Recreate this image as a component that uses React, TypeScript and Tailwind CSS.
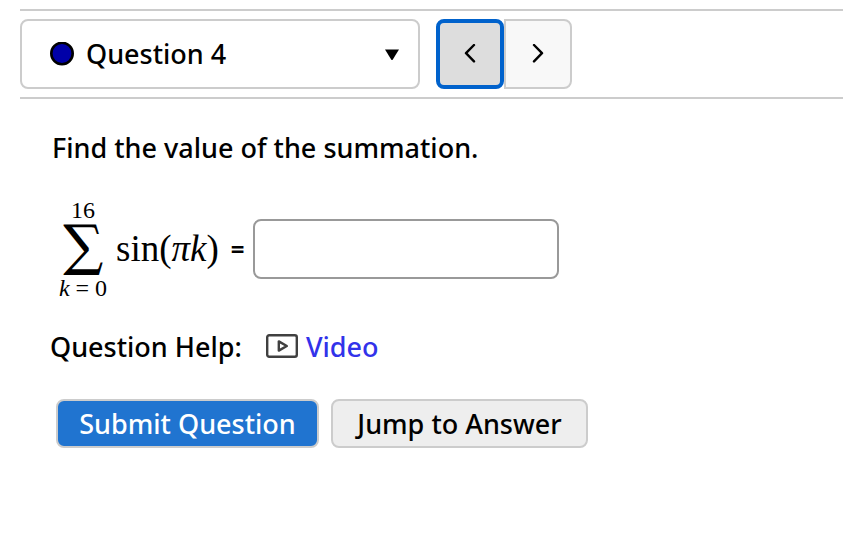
import { useState } from "react";

function Chevron({ points }: { points: string }) {
  return (
    <svg width="12" height="20" viewBox="0 0 12 20" fill="none" stroke="#000" strokeWidth="2.4" strokeLinecap="round" strokeLinejoin="round" aria-hidden="true">
      <polyline points={points} />
    </svg>
  );
}

function QuestionNav() {
  return (
    <nav className="ml-5 flex gap-4 border-y-2 border-[#ccc] py-2">
      <div className="relative flex h-[70px] w-[400px] items-center rounded-lg border-2 border-[#ccc]">
        <svg className="pointer-events-none absolute left-7" width="24" height="24" viewBox="0 0 24 24" aria-hidden="true">
          <circle cx="12" cy="11.5" r="10.7" fill="#0000a8" stroke="#000" strokeWidth="2.6" />
        </svg>
        <select aria-label="Question" className="h-full w-full appearance-none rounded-lg bg-transparent pl-16 font-medium text-black">
          <option>Question 4</option>
        </select>
        <svg className="pointer-events-none absolute right-[18px]" width="16" height="12" viewBox="0 0 16 12" aria-hidden="true">
          <path d="M1 1.6h14L8.8 11.4q-.8 1-1.6 0z" fill="#000" />
        </svg>
      </div>
      <div className="flex">
        <button type="button" aria-label="Previous question" className="flex w-[68px] items-center justify-center rounded-lg border-4 border-[#0062cc] bg-[#ddd]">
          <Chevron points="10,1 2,9.2 10,17.4" />
        </button>
        <button type="button" aria-label="Next question" className="flex w-[68px] items-center justify-center rounded-r-lg border-2 border-[#ccc] bg-[#f8f8f8]">
          <Chevron points="2,1 10,9.2 2,17.4" />
        </button>
      </div>
    </nav>
  );
}

function Summation() {
  return (
    <div className="flex items-center font-['Liberation_Serif',serif] font-normal">
      <div className="flex w-[58px] flex-col items-center">
        <span className="text-2xl leading-6">16</span>
        <span className="font-['DejaVu_Math_TeX_Gyre','DejaVu_Serif',serif] text-[48px] leading-[54px]">∑</span>
        <span className="flex gap-1.5 text-2xl leading-6">
          <i>k</i>
          <span>=</span>
          <span>0</span>
        </span>
      </div>
      <span className="ml-1 text-[37px] leading-9">
        sin(<i>πk</i>)
      </span>
    </div>
  );
}

export default function App() {
  const [answer, setAnswer] = useState("");
  return (
    <main className="bg-white pt-[9px] font-['Noto_Sans','Open_Sans',sans-serif] text-[27px] leading-9 font-medium text-black">
      <QuestionNav />
      <section className="pr-5 pl-[50px]">
        <p className="mt-[31px] pl-0.5">Find the value of the summation.</p>
        <div className="mt-8 flex items-center pl-1">
          <Summation />
          <label htmlFor="answer" className="ml-3 text-2xl font-bold">=</label>
          <input
            id="answer"
            value={answer}
            onChange={(e) => setAnswer(e.target.value)}
            className="ml-2 h-[60px] w-[306px] rounded-lg border-2 border-[#999] px-3"
          />
        </div>
        <p className="mt-[29px] flex items-center">
          Question Help:
          <a href="#video" className="ml-6 flex items-center gap-2 text-[#3232ea]">
            <svg width="32" height="26" viewBox="0 0 32 26" fill="none" stroke="#404040" strokeLinejoin="round" aria-hidden="true">
              <rect x="1.2" y="1.2" width="29.6" height="21.6" rx="2" strokeWidth="2.4" />
              <path d="M12.8 7.4v9.2l8-4.6z" strokeWidth="2.4" />
            </svg>
            Video
          </a>
        </p>
        <div className="mt-[34px] flex gap-3 pl-1.5">
          <button type="button" className="h-[49px] w-[263px] rounded-lg border-2 border-[#ccc] bg-[#2074d0] font-medium text-white">
            Submit Question
          </button>
          <button type="button" className="h-[49px] w-[257px] rounded-lg border-2 border-[#ccc] bg-[#eee] font-medium">
            Jump to Answer
          </button>
        </div>
      </section>
    </main>
  );
}
